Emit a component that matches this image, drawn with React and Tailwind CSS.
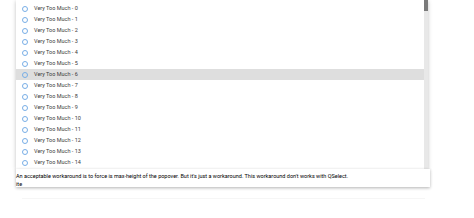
export default function App() {
  const items = Array.from({ length: 15 }, (_, i) => i);
  return (
    <div className="w-[474px] h-[218px] bg-white relative overflow-hidden" style={{ fontFamily: "Roboto, 'Liberation Sans', sans-serif" }}>
      <div className="absolute left-[16px] top-0 w-[412px] h-[169px] flex bg-white shadow-[0_1px_4px_rgba(0,0,0,0.25)]">
        <div className="flex-1 flex flex-col pt-[3px]">
          {items.map((i) => (
            <div key={i} className={`h-[11px] flex items-center pl-[6px] ${i === 6 ? "bg-[#dedede]" : ""}`}>
              <span className="w-[6px] h-[6px] rounded-full border-[1.5px] border-[#78aee6] shrink-0" />
              <span className="ml-[6px] text-[5.5px] leading-none text-[#3a3a3a]">Very Too Much - {i}</span>
            </div>
          ))}
        </div>
        <div className="w-[4px] bg-[#e8e8e8] flex flex-col">
          <div className="h-[11px] bg-[#7a7a7a]" />
        </div>
      </div>
      <div className="absolute left-[16px] top-[169px] w-[414px] h-[18px] bg-white shadow-[0_1px_3px_rgba(0,0,0,0.3)] pt-[3px] text-[5.5px] leading-[8px] text-black">
        <div>An acceptable workaround is to force is max-height of the popover. But it's just a workaround. This workaround don't works with QSelect.</div>
        <div>ite</div>
      </div>
      <div className="absolute left-[22px] top-[198px] w-[403px] h-px bg-[#f6f6f6]" />
    </div>
  );
}
